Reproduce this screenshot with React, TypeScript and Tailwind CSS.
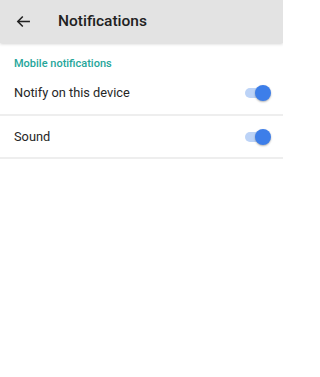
import React from "react";

function Toggle() {
  return (
    <div className="relative w-[26px] h-[16px] flex items-center">
      <div className="w-[22px] h-[10px] rounded-full bg-[#bcd3f7]" />
      <div className="absolute right-0 top-0 w-[16px] h-[16px] rounded-full bg-[#3d7ee9] shadow-[0_1px_2px_rgba(0,0,0,0.3)]" />
    </div>
  );
}

export default function App() {
  return (
    <div className="w-[283px] h-[377px] bg-white overflow-hidden" style={{ fontFamily: "Roboto, 'Noto Sans', sans-serif" }}>
      <div className="h-[43px] bg-[#e3e3e3] flex items-center shadow-[0_1px_3px_rgba(0,0,0,0.18)] relative z-10">
        <svg className="ml-[15px] w-[17px] h-[17px]" viewBox="0 0 24 24" fill="none" stroke="#212121" strokeWidth="2.2" strokeLinecap="square">
          <path d="M20 12H5" />
          <path d="M11 5l-7 7 7 7" strokeLinecap="butt" />
        </svg>
        <span className="ml-[26px] text-[15.5px] font-medium text-[#212121]">Notifications</span>
      </div>
      <div className="pt-[14px]">
        <div className="px-[14px] h-[14px] leading-[14px] text-[11px] font-medium text-[#26a69a]">Mobile notifications</div>
        <div className="h-[43px] px-[14px] pr-[12px] flex items-center justify-between">
          <span className="text-[12.8px] text-[#262626]">Notify on this device</span>
          <Toggle />
        </div>
        <div className="h-[2px] bg-[#eeeeee]" />
        <div className="h-[41px] px-[14px] pr-[12px] flex items-center justify-between">
          <span className="text-[12.8px] text-[#262626]">Sound</span>
          <Toggle />
        </div>
        <div className="h-[2px] bg-[#eeeeee]" />
      </div>
    </div>
  );
}
